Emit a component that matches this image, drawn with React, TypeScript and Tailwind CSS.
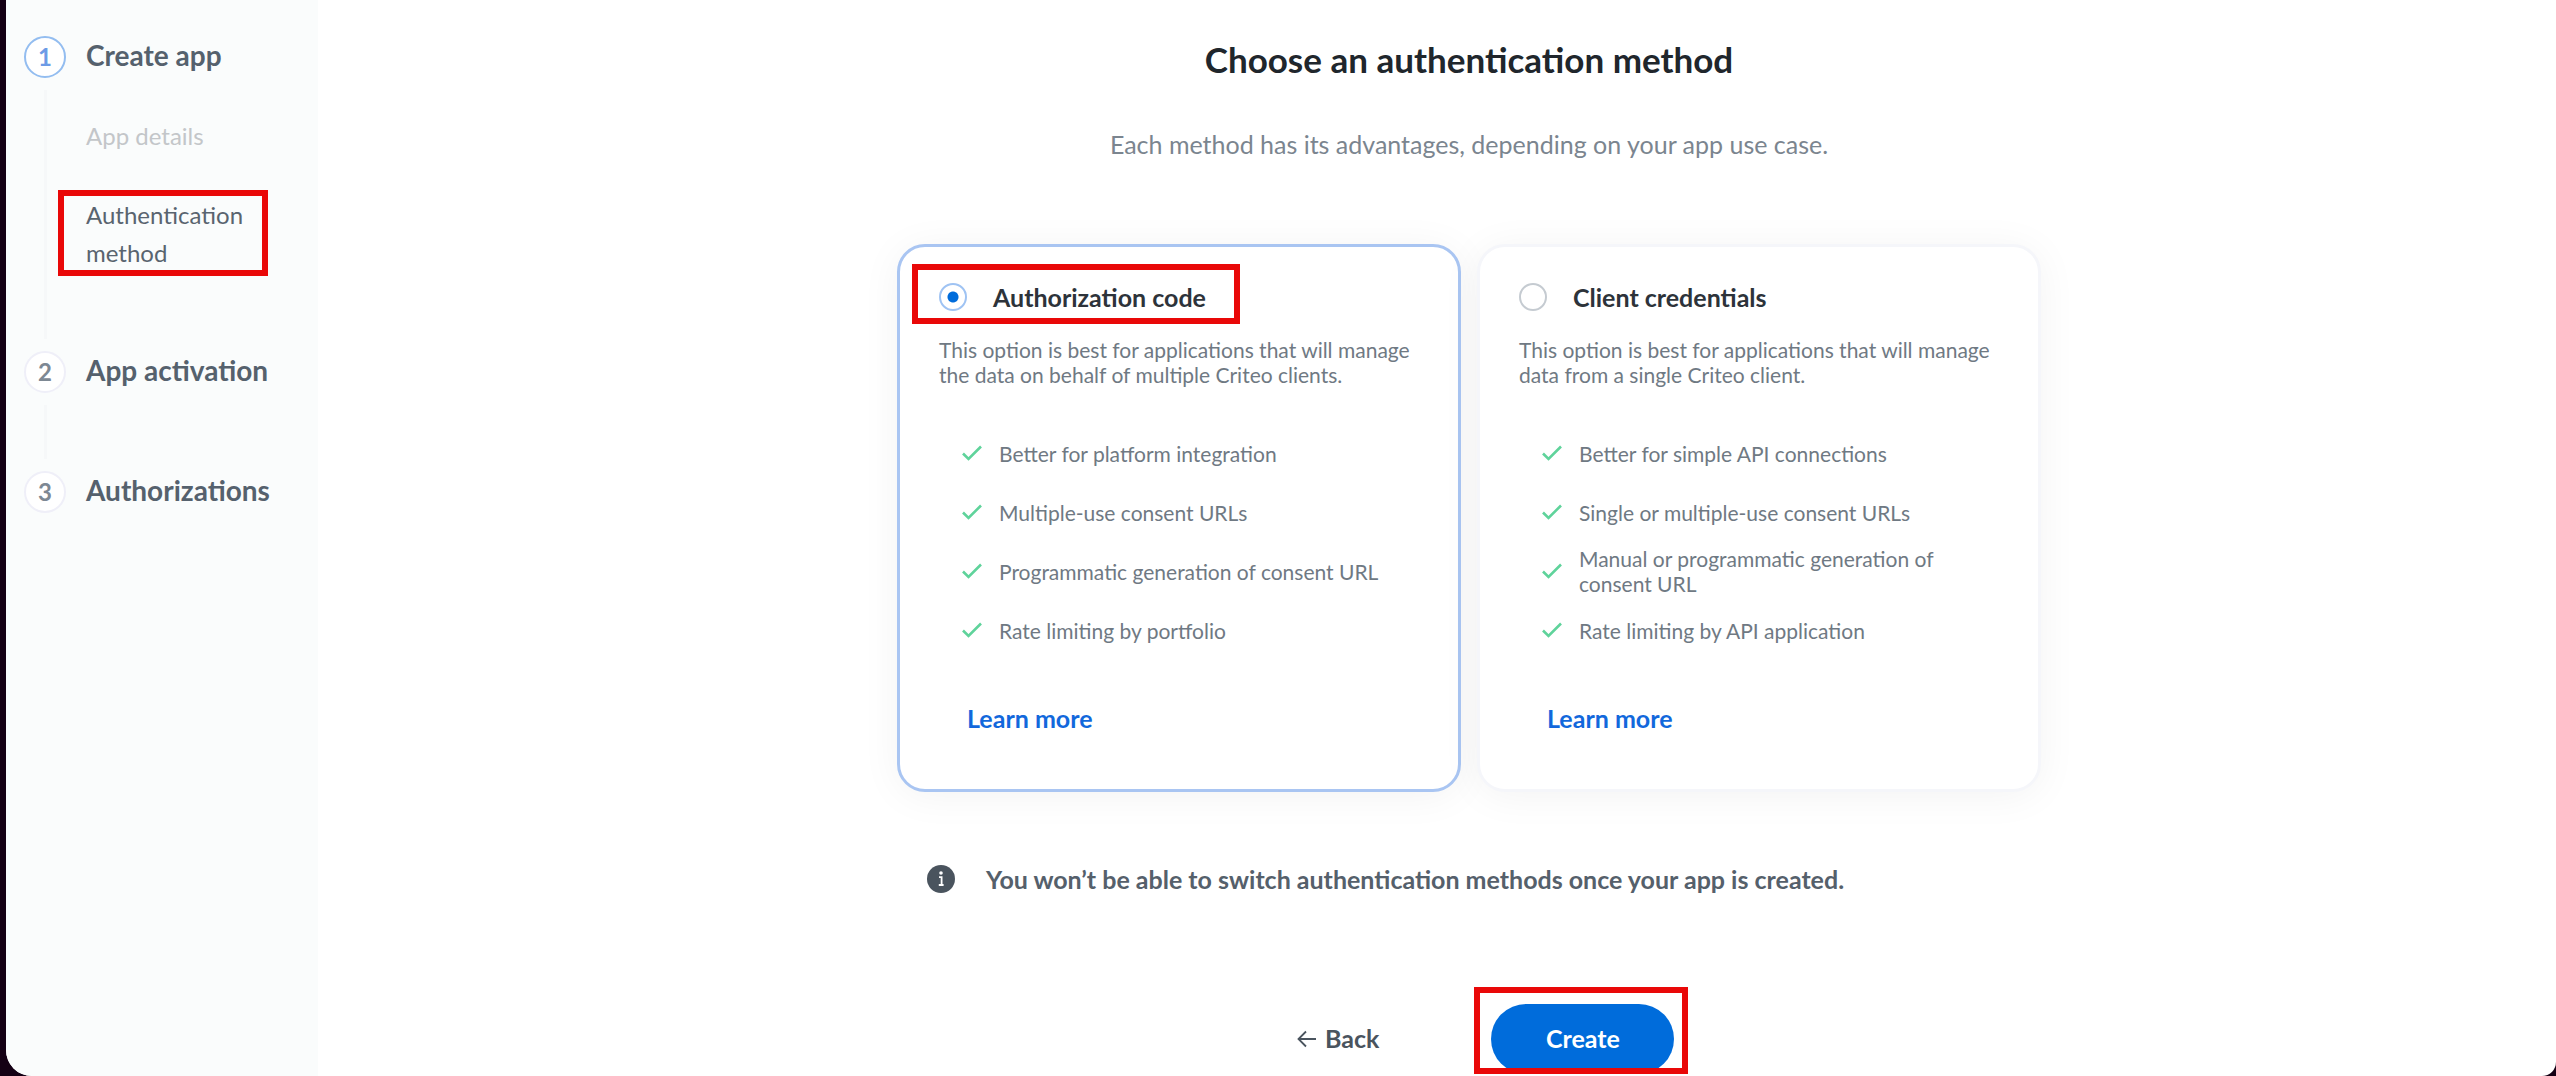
import React, { useState } from "react";

const steps = [
  { title: "Create app", items: ["App details", "Authentication method"] },
  { title: "App activation", items: [] },
  { title: "Authorizations", items: [] },
];

const methods = [
  {
    id: "authorization-code",
    title: "Authorization code",
    description: "This option is best for applications that will manage the data on behalf of multiple Criteo clients.",
    features: [
      "Better for platform integration",
      "Multiple-use consent URLs",
      "Programmatic generation of consent URL",
      "Rate limiting by portfolio",
    ],
  },
  {
    id: "client-credentials",
    title: "Client credentials",
    description: "This option is best for applications that will manage data from a single Criteo client.",
    features: [
      "Better for simple API connections",
      "Single or multiple-use consent URLs",
      "Manual or programmatic generation of consent URL",
      "Rate limiting by API application",
    ],
  },
];

const CheckIcon = () => (
  <svg viewBox="0 0 20 16" className="w-5 h-4 shrink-0" fill="none" stroke="#5fd39b" strokeWidth="2.6" aria-hidden="true">
    <path d="M1 8.5 L6.5 14 L19 1.5" />
  </svg>
);

const InfoIcon = () => (
  <svg viewBox="0 0 28 28" className="w-7 h-7 shrink-0" aria-hidden="true">
    <circle cx="14" cy="14" r="14" fill="#4a545e" />
    <circle cx="14" cy="8" r="1.8" fill="#fff" />
    <path d="M12 12.2 H14.6 V19.5 M11.8 20 H16.6" stroke="#fff" strokeWidth="1.8" fill="none" />
  </svg>
);

const ArrowIcon = () => (
  <svg viewBox="0 0 20 20" className="w-5 h-5 shrink-0" fill="none" stroke="#4a545e" strokeWidth="1.8" aria-hidden="true">
    <path d="M19 10 H2 M9 2.5 L1.5 10 L9 17.5" />
  </svg>
);

const Sidebar = () => (
  <nav className="w-[312px] shrink-0 bg-[#fafcfc] pt-9 pl-[18px]">
    <ol>
      {steps.map((step, index) => (
        <li key={step.title} className="flex gap-5">
          <div className="flex flex-col items-center">
            <span
              className={`flex items-center justify-center w-[42px] h-[42px] rounded-full border-2 bg-white text-2xl font-bold ${
                index === 0 ? "border-[#93bdf0] text-[#6c9be6]" : "border-[#efeff8] text-[#7d8893]"
              }`}
            >
              {index + 1}
            </span>
            {index < steps.length - 1 && <span className="flex-1 w-[3px] my-3 bg-[#f6f8f9]" />}
          </div>
          <div className={index === 0 ? "pb-[79px]" : "pb-[82px]"}>
            <p className="text-[28px] leading-[38px] font-bold text-[#55616d]">{step.title}</p>
            {step.items.length > 0 && (
              <ul className="mt-[43px] space-y-[41px] w-[154px] text-2xl leading-[38px]">
                <li className="text-[#c3c6c9]">{step.items[0]}</li>
                <li className="relative text-[#59646f]">
                  {step.items[1]}
                  <span className="absolute -inset-x-7 -top-1.5 -bottom-1 border-[6px] border-[#e90808]" />
                </li>
              </ul>
            )}
          </div>
        </li>
      ))}
    </ol>
  </nav>
);

const App = () => {
  const [selected, setSelected] = useState("authorization-code");

  return (
    <div className="min-h-screen flex bg-[#140014] pl-1.5 font-['Lato',sans-serif]">
      <div className="flex flex-1 overflow-hidden rounded-bl-[26px] rounded-br-[14px] bg-white">
        <Sidebar />
        <main className="flex-1 pl-16 pt-[38px]">
          <h1 className="text-center text-[35px] leading-[42px] font-bold text-[#20262c]">
            Choose an authentication method
          </h1>
          <p className="mt-12 text-center text-[25px] leading-8 text-[#7b858f]">
            Each method has its advantages, depending on your app use case.
          </p>

          <div className="mx-auto mt-[84px] max-w-[1144px]">
            <div className="grid grid-cols-2 gap-4">
              {methods.map((method) => {
                const active = selected === method.id;
                return (
                  <section
                    key={method.id}
                    className={`rounded-[28px] border-[3px] bg-white pt-[34px] pb-[56px] pl-[39px] pr-10 shadow-[0_4px_40px_rgba(0,0,0,0.05)] ${
                      active ? "border-[#a9c5f2]" : "border-[#f5f6fa]"
                    }`}
                  >
                    <label className="relative flex w-fit items-center gap-[26px] text-[25px] leading-8 font-bold text-[#2d333a]">
                      <input
                        type="radio"
                        name="method"
                        checked={active}
                        onChange={() => setSelected(method.id)}
                        className="appearance-none w-7 h-7 rounded-full border-2 border-[#c5cbd1] checked:border-[#9fc3f3] bg-white checked:bg-[radial-gradient(circle,#006cdb_5px,transparent_6px)]"
                      />
                      {method.title}
                      {method.id === "authorization-code" && (
                        <span className="absolute -left-[27px] -right-[34px] -top-[17px] -bottom-[11px] border-[6px] border-[#e90808]" />
                      )}
                    </label>
                    <p className="mt-6 text-[21px] leading-[25px] text-[#6f7983]">{method.description}</p>
                    <ul className="mt-[41px] ml-[23px] space-y-[9px]">
                      {method.features.map((feature) => (
                        <li key={feature} className="flex items-center gap-[17px] h-[50px] text-[21px] leading-[25px] text-[#6f7983]">
                          <CheckIcon />
                          {feature}
                        </li>
                      ))}
                    </ul>
                    <a href="#" className="block w-fit mt-12 ml-7 text-[25px] leading-[30px] font-bold text-[#1268dc]">
                      Learn more
                    </a>
                  </section>
                );
              })}
            </div>

            <p className="flex items-center gap-[31px] mt-[71px] pl-[30px] text-[25px] leading-8 font-bold text-[#55606b]">
              <InfoIcon />
              You won’t be able to switch authentication methods once your app is created.
            </p>

            <div className="flex items-center gap-28 mt-[109px] pl-[400px]">
              <button type="button" className="flex items-center gap-2 text-[25px] font-bold text-[#4a545e]">
                <ArrowIcon />
                Back
              </button>
              <div className="relative">
                <button type="button" className="w-[183px] h-[70px] rounded-full bg-[#006cdb] text-[25px] font-bold text-white">
                  Create
                </button>
                <span className="absolute -left-[17px] -right-[14px] -top-[17px] bottom-0 border-[6px] border-[#e90808]" />
              </div>
            </div>
          </div>
        </main>
      </div>
    </div>
  );
};

export default App;
